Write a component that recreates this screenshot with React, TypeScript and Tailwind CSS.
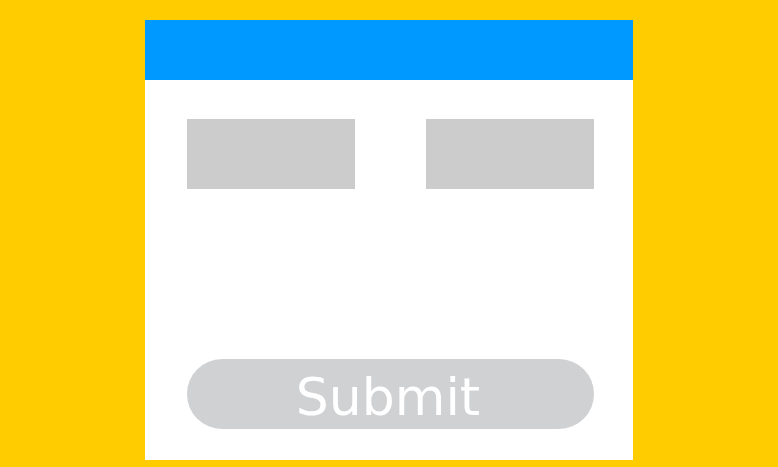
export default function App() {
  return (
    <div className="min-h-[467px] w-full bg-[#ffcc00] flex justify-center pt-[20px]" style={{ fontFamily: '"DejaVu Sans", sans-serif' }}>
      <div className="w-[488px] h-[440px] bg-white flex flex-col">
        <div className="h-[60px] bg-[#0099ff]" />
        <div className="flex flex-col flex-1 pl-[42px] pr-[39px] pt-[39px] pb-[31px]">
          <div className="flex justify-between">
            <div className="w-[168px] h-[70px] bg-[#cccccc]" />
            <div className="w-[168px] h-[70px] bg-[#cccccc]" />
          </div>
          <button className="mt-auto h-[70px] w-full rounded-full bg-[#d0d1d3] text-white text-[52px] leading-none pt-[6px] pr-[5px] flex items-center justify-center">
            Submit
          </button>
        </div>
      </div>
    </div>
  );
}
